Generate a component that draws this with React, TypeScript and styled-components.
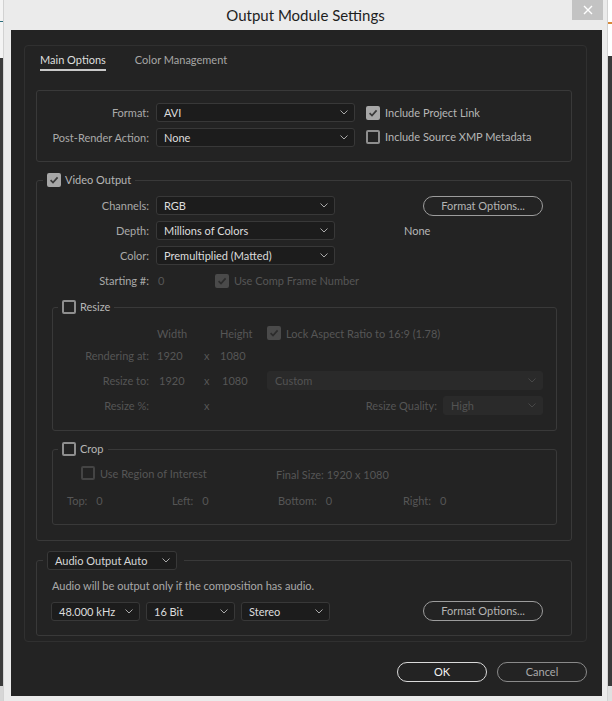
import React from "react";
import styled, { createGlobalStyle } from "styled-components";

const GlobalStyle = createGlobalStyle`
  html, body { margin: 0; padding: 0; background: #ececec; }
  * { box-sizing: border-box; }
`;

const UI_FONT = `Lato, "Open Sans", "Noto Sans", sans-serif`;

/* ---------- page frame ---------- */
const Screen = styled.div`
  width: 612px;
  height: 701px;
  display: flex;
  overflow: hidden;
  font-family: ${UI_FONT};
  font-size: 11px;
`;

const EdgeStrip = styled.div<{ $side: "left" | "right" }>`
  flex: none;
  width: ${(p) => (p.$side === "left" ? 3 : 4)}px;
  background: ${(p) =>
    p.$side === "left"
      ? "linear-gradient(#f4f4f4 0 21px, #2c6d7c 21px 22px, #f4f4f4 22px 58px, #3b3b3b 58px 686px, #d6d6d6 686px)"
      : "linear-gradient(#ffffff 0 22px, #d88a3a 22px 24px, #ffffff 24px 56px, #3a3a3a 56px 686px, #e0e0e0 686px)"};
`;

const Window = styled.div`
  flex: 1;
  display: flex;
  flex-direction: column;
  background: #ebebeb;
  border-left: 1px solid #d2d2d2;
  border-right: 1px solid #d2d2d2;
`;

const TitleBar = styled.div`
  flex: none;
  height: 30px;
  display: grid;
  grid-template-columns: 1fr auto 1fr;
  align-items: start;
`;

const Title = styled.div`
  font-family: ${UI_FONT};
  font-size: 15px;
  line-height: 30px;
  color: #1e1e1e;
`;

const CloseButton = styled.div`
  justify-self: end;
  margin-right: 4px;
  width: 31px;
  height: 20px;
  background: #c3c3c3;
  display: flex;
  align-items: center;
  justify-content: center;
`;

const Client = styled.div`
  flex: 1;
  margin: 0 5px 5px 7px;
  background: #232323;
  display: flex;
  flex-direction: column;
  padding: 15px 15px 0 13px;
`;

/* ---------- tab panel ---------- */
const TabPanel = styled.div`
  border: 1px solid #303030;
  border-radius: 4px;
  padding: 6px 14px 5px 11px;
`;

const TabBar = styled.div`
  display: flex;
  gap: 29px;
  padding-left: 4px;
`;

const Tab = styled.div<{ $active?: boolean }>`
  line-height: 16px;
  padding-bottom: 1px;
  border-bottom: 2px solid ${(p) => (p.$active ? "#c9c9c9" : "transparent")};
  color: ${(p) => (p.$active ? "#dedede" : "#a6a6a6")};
`;

const Section = styled.div`
  margin-top: 19px;
  border: 1px solid #393939;
  border-radius: 3px;
  padding: 12px 0 14px 0;
`;

const FormGrid = styled.div`
  display: grid;
  grid-template-columns: 112px 199px 1fr;
  grid-auto-rows: 19px;
  column-gap: 7px;
  row-gap: 6px;
  align-items: center;
`;

const Label = styled.span<{ $dim?: boolean }>`
  text-align: right;
  white-space: nowrap;
  color: ${(p) => (p.$dim ? "#555555" : "#a9a9a9")};
`;

const Text = styled.span<{ $tone?: "dim" | "soft" | "bright"; $pad?: number }>`
  white-space: nowrap;
  padding-left: ${(p) => p.$pad ?? 0}px;
  color: ${(p) =>
    p.$tone === "dim" ? "#565656" : p.$tone === "bright" ? "#dcdcdc" : "#b6b6b6"};
`;

const SideOption = styled.div`
  padding-left: 4px;
`;

/* ---------- fieldset groups ---------- */
const Group = styled.fieldset<{ $mt: number; $mx?: string }>`
  margin: ${(p) => p.$mt}px ${(p) => p.$mx ?? "0"};
  margin-bottom: 0;
  min-width: 0;
  padding: 0;
  border: 1px solid #393939;
  border-radius: 3px;
`;

const Legend = styled.legend<{ $offset: number; $padRight?: number }>`
  margin-left: ${(p) => p.$offset}px;
  padding: 0 ${(p) => p.$padRight ?? 4}px 0 4px;
`;

const LegendInner = styled.span`
  display: inline-flex;
  align-items: center;
  gap: 4px;
  line-height: 14px;
  color: #b6b6b6;
  vertical-align: top;
`;

const GroupBody = styled.div<{ $pad: string }>`
  padding: ${(p) => p.$pad};
`;

/* ---------- video ---------- */
const VideoGrid = styled.div`
  display: grid;
  grid-template-columns: 112px 179px 1fr 139px;
  grid-auto-rows: 19px;
  column-gap: 7px;
  row-gap: 6px;
  align-items: center;
  padding-right: 28px;
`;

const StartCell = styled.div`
  display: flex;
  align-items: center;
  white-space: nowrap;
`;

const StartValue = styled.span`
  flex: none;
  width: 59px;
  padding-left: 2px;
  color: #565656;
`;

const ResizeGrid = styled.div`
  display: grid;
  grid-template-columns: 104px 47px 16px 47px 1fr;
  grid-template-rows: 14px 19px 19px 19px;
  row-gap: 6px;
  align-items: center;
  padding-right: 13px;
`;

const ResizeLabel = styled(Label)`
  padding-right: 8px;
`;

const QualityCell = styled.div`
  display: flex;
  justify-content: flex-end;
  align-items: center;
  gap: 6px;
`;

const CropGrid = styled.div`
  display: grid;
  grid-template-columns: 105px 106px 125px 1fr;
  grid-template-rows: 14px 14px;
  row-gap: 12px;
  align-items: center;
  padding-left: 14px;
`;

const CropWide = styled.div`
  grid-column: 1 / 3;
  padding-left: 14px;
`;

const FinalSize = styled(Text)`
  margin-left: -2px;
`;

const Pair = styled.div`
  display: flex;
  gap: 9px;
  color: #565656;
`;

/* ---------- audio ---------- */
const AudioNote = styled.div`
  line-height: 14px;
  margin-left: 1px;
  color: #a9a9a9;
`;

const AudioRow = styled.div`
  margin-top: 8px;
  display: flex;
  align-items: center;
  gap: 6px;
`;

const Push = styled.div`
  margin-left: auto;
`;

/* ---------- controls ---------- */
const SelectBox = styled.div<{ $w?: number; $fill?: boolean; $disabled?: boolean }>`
  display: flex;
  align-items: center;
  justify-content: space-between;
  height: 19px;
  width: ${(p) => (p.$fill ? "100%" : p.$w ? `${p.$w}px` : "auto")};
  padding: 0 6px 0 7px;
  background: ${(p) => (p.$disabled ? "#2a2a2a" : "#1c1c1c")};
  border: 1px solid ${(p) => (p.$disabled ? "#2a2a2a" : "#383838")};
  border-radius: 3px;
  color: ${(p) => (p.$disabled ? "#535353" : "#dcdcdc")};
  line-height: 17px;
  white-space: nowrap;
`;

const LegendSelect = styled(SelectBox)`
  color: #d6d6d6;
`;

const ChevronSvg = styled.svg`
  flex: none;
  display: block;
`;

function Select(props: { value: string; w?: number; fill?: boolean; disabled?: boolean }) {
  return (
    <SelectBox $w={props.w} $fill={props.fill} $disabled={props.disabled}>
      <span>{props.value}</span>
      <Chevron dim={props.disabled} />
    </SelectBox>
  );
}

function Chevron({ dim }: { dim?: boolean }) {
  return (
    <ChevronSvg width="8" height="5" viewBox="0 0 8 5">
      <polyline
        points="0.5,0.5 4,4 7.5,0.5"
        fill="none"
        stroke={dim ? "#474747" : "#a9a9a9"}
        strokeWidth="1"
      />
    </ChevronSvg>
  );
}

const CheckBox = styled.span<{ $checked?: boolean; $disabled?: boolean }>`
  flex: none;
  width: 14px;
  height: 14px;
  border-radius: 2px;
  display: inline-flex;
  align-items: center;
  justify-content: center;
  background: ${(p) => (p.$checked ? (p.$disabled ? "#4a4a4a" : "#a7a7a7") : "transparent")};
  border: 2px solid
    ${(p) =>
      p.$checked ? (p.$disabled ? "#4a4a4a" : "#a7a7a7") : p.$disabled ? "#444444" : "#8e8e8e"};
`;

const CheckRow = styled.span<{ $disabled?: boolean }>`
  display: inline-flex;
  align-items: center;
  gap: 5px;
  white-space: nowrap;
  color: ${(p) => (p.$disabled ? "#565656" : "#b6b6b6")};
`;

function Check({ checked, disabled }: { checked?: boolean; disabled?: boolean }) {
  return (
    <CheckBox $checked={checked} $disabled={disabled}>
      {checked && (
        <svg width="10" height="10" viewBox="0 0 10 10">
          <polyline
            points="1.6,5.2 4,7.6 8.6,2.4"
            fill="none"
            stroke={disabled ? "#2c2c2c" : "#3a3a3a"}
            strokeWidth="1.7"
          />
        </svg>
      )}
    </CheckBox>
  );
}

const PillButton = styled.div<{ $variant?: "primary" | "plain" | "secondary"; $w?: number }>`
  width: ${(p) => p.$w ?? 120}px;
  height: 20px;
  border-radius: 10px;
  display: flex;
  align-items: center;
  justify-content: center;
  justify-self: end;
  border: 1px solid
    ${(p) => (p.$variant === "primary" ? "#dadada" : p.$variant === "secondary" ? "#8a8a8a" : "#9c9c9c")};
  color: ${(p) => (p.$variant === "primary" ? "#f2f2f2" : p.$variant === "secondary" ? "#a9a9a9" : "#b4b4b4")};
  line-height: 18px;
`;

const ButtonRow = styled.div`
  margin-top: 20px;
  display: flex;
  justify-content: flex-end;
  gap: 10px;
`;

export default function App() {
  return (
    <>
      <GlobalStyle />
      <Screen>
        <EdgeStrip $side="left" />
        <Window>
          <TitleBar>
            <span />
            <Title>Output Module Settings</Title>
            <CloseButton aria-label="Close">
              <svg width="10" height="10" viewBox="0 0 10 10">
                <path d="M1 1 L9 9 M9 1 L1 9" stroke="#ffffff" strokeWidth="1.4" />
              </svg>
            </CloseButton>
          </TitleBar>
          <Client>
            <TabPanel>
              <TabBar>
                <Tab $active>Main Options</Tab>
                <Tab>Color Management</Tab>
              </TabBar>

              <Section>
                <FormGrid>
                  <Label>Format:</Label>
                  <Select value="AVI" w={199} />
                  <SideOption>
                    <CheckRow>
                      <Check checked />
                      Include Project Link
                    </CheckRow>
                  </SideOption>
                  <Label>Post-Render Action:</Label>
                  <Select value="None" w={199} />
                  <SideOption>
                    <CheckRow>
                      <Check />
                      Include Source XMP Metadata
                    </CheckRow>
                  </SideOption>
                </FormGrid>
              </Section>

              <Group $mt={11}>
                <Legend $offset={6}>
                  <LegendInner>
                    <Check checked />
                    Video Output
                  </LegendInner>
                </Legend>
                <GroupBody $pad="9px 0 15px 0">
                  <VideoGrid>
                    <Label>Channels:</Label>
                    <Select value="RGB" fill />
                    <span />
                    <PillButton>Format Options...</PillButton>

                    <Label>Depth:</Label>
                    <Select value="Millions of Colors" fill />
                    <span />
                    <Text>None</Text>

                    <Label>Color:</Label>
                    <Select value="Premultiplied (Matted)" fill />
                    <span />
                    <span />

                    <Label>Starting #:</Label>
                    <StartCell>
                      <StartValue>0</StartValue>
                      <CheckRow $disabled>
                        <Check checked disabled />
                        Use Comp Frame Number
                      </CheckRow>
                    </StartCell>
                  </VideoGrid>

                  <Group $mt={10} $mx="14px 0 15px">
                    <Legend $offset={5}>
                      <LegendInner>
                        <Check />
                        Resize
                      </LegendInner>
                    </Legend>
                    <GroupBody $pad="12px 0 15px 0">
                      <ResizeGrid>
                        <span />
                        <Text $tone="dim">Width</Text>
                        <span />
                        <Text $tone="dim">Height</Text>
                        <CheckRow $disabled>
                          <Check checked disabled />
                          Lock Aspect Ratio to 16:9 (1.78)
                        </CheckRow>

                        <ResizeLabel $dim>Rendering at:</ResizeLabel>
                        <Text $tone="dim">1920</Text>
                        <Text $tone="dim">x</Text>
                        <Text $tone="dim">1080</Text>
                        <span />

                        <ResizeLabel $dim>Resize to:</ResizeLabel>
                        <Text $tone="dim" $pad={2}>1920</Text>
                        <Text $tone="dim">x</Text>
                        <Text $tone="dim" $pad={2}>1080</Text>
                        <Select value="Custom" fill disabled />

                        <ResizeLabel $dim>Resize %:</ResizeLabel>
                        <span />
                        <Text $tone="dim">x</Text>
                        <span />
                        <QualityCell>
                          <Label $dim>Resize Quality:</Label>
                          <Select value="High" w={100} disabled />
                        </QualityCell>
                      </ResizeGrid>
                    </GroupBody>
                  </Group>

                  <Group $mt={11} $mx="14px 0 15px">
                    <Legend $offset={5}>
                      <LegendInner>
                        <Check />
                        Crop
                      </LegendInner>
                    </Legend>
                    <GroupBody $pad="11px 0 17px 0">
                      <CropGrid>
                        <CropWide>
                          <CheckRow $disabled>
                            <Check disabled />
                            Use Region of Interest
                          </CheckRow>
                        </CropWide>
                        <FinalSize $tone="dim">Final Size: 1920 x 1080</FinalSize>
                        <span />

                        <Pair>
                          <span>Top:</span>
                          <span>0</span>
                        </Pair>
                        <Pair>
                          <span>Left:</span>
                          <span>0</span>
                        </Pair>
                        <Pair>
                          <span>Bottom:</span>
                          <span>0</span>
                        </Pair>
                        <Pair>
                          <span>Right:</span>
                          <span>0</span>
                        </Pair>
                      </CropGrid>
                    </GroupBody>
                  </Group>
                </GroupBody>
              </Group>

              <Group $mt={10}>
                <Legend $offset={6} $padRight={7}>
                  <LegendSelect $w={130}>
                    <span>Audio Output Auto</span>
                    <Chevron />
                  </LegendSelect>
                </Legend>
                <GroupBody $pad="9px 28px 14px 14px">
                  <AudioNote>Audio will be output only if the composition has audio.</AudioNote>
                  <AudioRow>
                    <Select value="48.000 kHz" w={89} />
                    <Select value="16 Bit" w={89} />
                    <Select value="Stereo" w={89} />
                    <Push>
                      <PillButton>Format Options...</PillButton>
                    </Push>
                  </AudioRow>
                </GroupBody>
              </Group>
            </TabPanel>

            <ButtonRow>
              <PillButton $variant="primary" $w={90}>OK</PillButton>
              <PillButton $variant="secondary" $w={90}>Cancel</PillButton>
            </ButtonRow>
          </Client>
        </Window>
        <EdgeStrip $side="right" />
      </Screen>
    </>
  );
}
